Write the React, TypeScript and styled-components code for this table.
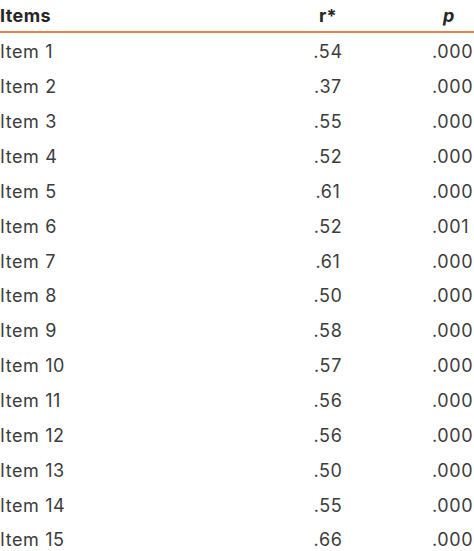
import { Fragment } from 'react'
import styled, { createGlobalStyle } from 'styled-components'

const GlobalStyle = createGlobalStyle`
  html, body {
    margin: 0;
    padding: 0;
    background: #ffffff;
  }
  body {
    font-family: Inter, 'Liberation Sans', Arial, sans-serif;
    color: #333333;
    overflow: hidden;
  }
`

const TableWrapper = styled.div`
  width: 474px;
  height: 551px;
  overflow: hidden;
`

const Table = styled.div`
  display: grid;
  grid-template-columns: 297px 62px 200px;
  width: 559px;
`

const HeaderCell = styled.div<{ $align: 'left' | 'center'; $italic?: boolean; $pad?: number }>`
  height: 33px;
  display: flex;
  align-items: center;
  justify-content: ${(p) => (p.$align === 'center' ? 'center' : 'flex-start')};
  padding-left: ${(p) => p.$pad ?? 0}px;
  padding-bottom: 1px;
  font-size: 18px;
  font-weight: 700;
  font-style: ${(p) => (p.$italic ? 'italic' : 'normal')};
  letter-spacing: 0.4px;
  color: #262626;
  border-bottom: 2px solid #e5824a;
  margin-bottom: 1.5px;
  box-sizing: border-box;
`

const Cell = styled.div<{ $align: 'left' | 'center'; $pad?: number }>`
  height: 34.86px;
  display: flex;
  align-items: center;
  justify-content: ${(p) => (p.$align === 'center' ? 'center' : 'flex-start')};
  padding-left: ${(p) => p.$pad ?? 0}px;
  font-size: 18px;
  color: #3c3c3c;
  letter-spacing: 0.6px;
  white-space: nowrap;
`

const rows = [
  { r: '.54', p: '.0000' },
  { r: '.37', p: '.0000' },
  { r: '.55', p: '.0000' },
  { r: '.52', p: '.0000' },
  { r: '.61', p: '.0000' },
  { r: '.52', p: '.001' },
  { r: '.61', p: '.0000' },
  { r: '.50', p: '.0000' },
  { r: '.58', p: '.0000' },
  { r: '.57', p: '.0000' },
  { r: '.56', p: '.0000' },
  { r: '.56', p: '.0000' },
  { r: '.50', p: '.0000' },
  { r: '.55', p: '.0000' },
  { r: '.66', p: '.0000' },
]

export default function App() {
  return (
    <TableWrapper>
      <GlobalStyle />
      <Table>
        <HeaderCell $align="left">Items</HeaderCell>
        <HeaderCell $align="center">r*</HeaderCell>
        <HeaderCell $align="left" $italic $pad={84}>
          p
        </HeaderCell>
        {rows.map((row, i) => (
          <Fragment key={i}>
            <Cell $align="left">Item {i + 1}</Cell>
            <Cell $align="center">{row.r}</Cell>
            <Cell $align="left" $pad={73}>
              {row.p}
            </Cell>
          </Fragment>
        ))}
      </Table>
    </TableWrapper>
  )
}
